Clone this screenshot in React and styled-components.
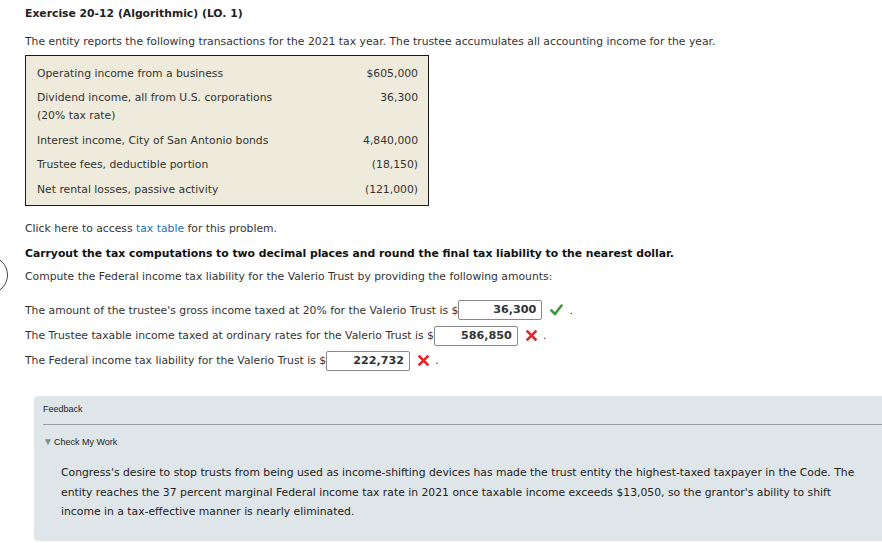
import React from 'react';
import styled, { createGlobalStyle } from 'styled-components';

const GlobalStyle = createGlobalStyle`
  html, body {
    margin: 0;
    padding: 0;
    background: #fff;
  }
  body {
    font-family: "DejaVu Sans", Verdana, sans-serif;
    font-size: 10.8px;
    color: #333;
    overflow: hidden;
  }
`;

const transactions = [
  { label: 'Operating income from a business', amount: '$605,000' },
  { label: 'Dividend income, all from U.S. corporations', note: '(20% tax rate)', amount: '36,300' },
  { label: 'Interest income, City of San Antonio bonds', amount: '4,840,000' },
  { label: 'Trustee fees, deductible portion', amount: '(18,150)' },
  { label: 'Net rental losses, passive activity', amount: '(121,000)' },
];

const answers = [
  { text: "The amount of the trustee's gross income taxed at 20% for the Valerio Trust is $", value: '36,300', ok: true },
  { text: 'The Trustee taxable income taxed at ordinary rates for the Valerio Trust is $', value: '586,850', ok: false },
  { text: 'The Federal income tax liability for the Valerio Trust is $', value: '222,732', ok: false },
];

function Check() {
  return (
    <svg width="13" height="12" viewBox="0 0 13 12">
      <path d="M1.5 6.5 L5 10 L11.5 1.5" fill="none" stroke="#3a9a3a" strokeWidth="2.6" strokeLinecap="round" strokeLinejoin="round" />
    </svg>
  );
}

function Cross() {
  return (
    <svg width="11" height="11" viewBox="0 0 11 11">
      <path d="M1.5 1.5 L9.5 9.5 M9.5 1.5 L1.5 9.5" fill="none" stroke="#e0262b" strokeWidth="2.6" strokeLinecap="square" />
    </svg>
  );
}

export default function App() {
  return (
    <Page>
      <GlobalStyle />
      <EdgeArc />
      <Title>Exercise 20-12 (Algorithmic) (LO. 1)</Title>
      <Intro>
        The entity reports the following transactions for the 2021 tax year. The trustee accumulates all accounting income for the year.
      </Intro>

      <Ledger>
        {transactions.map((t) => (
          <LedgerRow key={t.label}>
            <LedgerLabel>
              {t.label}
              {t.note && <Note>{t.note}</Note>}
            </LedgerLabel>
            <LedgerAmount>{t.amount}</LedgerAmount>
          </LedgerRow>
        ))}
      </Ledger>

      <Line $top={16}>
        Click here to access <Link>tax table</Link> for this problem.
      </Line>
      <Instruction>
        Carryout the tax computations to two decimal places and round the final tax liability to the nearest dollar.
      </Instruction>
      <Line $top={9}>Compute the Federal income tax liability for the Valerio Trust by providing the following amounts:</Line>

      <Answers>
        {answers.map((a) => (
          <AnswerRow key={a.text}>
            {a.text}
            <AnswerBox>{a.value}</AnswerBox>
            <Mark>{a.ok ? <Check /> : <Cross />}</Mark>
            <Dot>.</Dot>
          </AnswerRow>
        ))}
      </Answers>

      <Feedback>
        <FeedbackHead>Feedback</FeedbackHead>
        <Toggle>
          <Caret>▼</Caret>Check My Work
        </Toggle>
        <Explanation>
          Congress's desire to stop trusts from being used as income-shifting devices has made the trust entity the highest-taxed taxpayer in the Code. The
          entity reaches the 37 percent marginal Federal income tax rate in 2021 once taxable income exceeds $13,050, so the grantor's ability to shift
          income in a tax-effective manner is nearly eliminated.
        </Explanation>
      </Feedback>
    </Page>
  );
}

const Page = styled.div`
  position: relative;
  width: 882px;
  height: 543px;
  padding: 7px 0 0 25px;
  box-sizing: border-box;
  overflow: hidden;
`;

const EdgeArc = styled.div`
  position: absolute;
  left: -30px;
  top: 256px;
  width: 36px;
  height: 36px;
  border: 1.5px solid #444;
  border-radius: 50%;
`;

const Title = styled.h1`
  margin: 0;
  font-size: 10.8px;
  font-weight: bold;
  color: #222;
  line-height: 14px;
`;

const Intro = styled.p`
  margin: 14px 0 0;
  line-height: 14px;
`;

const Ledger = styled.div`
  margin-top: 6px;
  width: 404px;
  box-sizing: border-box;
  border: 1px solid #1a1a1a;
  background: #eeebdc;
  padding: 6px 10px 3px 11px;
  display: flex;
  flex-direction: column;
`;

const LedgerRow = styled.div`
  display: flex;
  justify-content: space-between;
  align-items: flex-start;
  padding: 2px 0 2.4px;
  line-height: 20px;
`;

const LedgerLabel = styled.div`
  display: flex;
  flex-direction: column;
  line-height: 20px;
`;

const Note = styled.span`
  margin-top: -2px;
`;

const LedgerAmount = styled.div`
  text-align: right;
`;

const Line = styled.div`
  margin-top: ${(p) => p.$top}px;
  line-height: 14px;
`;

const Link = styled.span`
  color: #1f6fb5;
`;

const Instruction = styled.div`
  margin-top: 11px;
  font-weight: bold;
  color: #111;
  line-height: 14px;
`;

const Answers = styled.div`
  margin-top: 16px;
  display: flex;
  flex-direction: column;
  gap: 4.2px;
`;

const AnswerRow = styled.div`
  display: flex;
  align-items: center;
  height: 21px;
`;

const AnswerBox = styled.div`
  width: 84px;
  height: 20px;
  box-sizing: border-box;
  border: 1px solid #8a8a8a;
  border-radius: 2px;
  background: #fff;
  padding: 0 5px;
  font-size: 11.2px;
  font-weight: bold;
  color: #333;
  text-align: right;
  line-height: 18px;
`;

const Mark = styled.span`
  display: inline-flex;
  margin-left: 8px;
`;

const Dot = styled.span`
  margin-left: 6px;
`;

const Feedback = styled.section`
  margin-top: 25px;
  margin-left: 9px;
  width: 860px;
  height: 145px;
  background: #dfe6e9;
  border-radius: 4px;
  padding: 8px 0 0 9px;
  box-sizing: border-box;
`;

const FeedbackHead = styled.div`
  font-family: "Liberation Sans", Arial, sans-serif;
  font-size: 9px;
  color: #222;
  padding-bottom: 9px;
  border-bottom: 1px solid #9a9d9f;
  line-height: 11px;
`;

const Toggle = styled.div`
  margin-top: 11px;
  font-family: "Liberation Sans", Arial, sans-serif;
  font-size: 9px;
  color: #222;
  line-height: 11px;
`;

const Caret = styled.span`
  color: #8a8a8a;
  font-size: 10px;
  margin-right: 1px;
`;

const Explanation = styled.p`
  margin: 15px 0 0 18px;
  width: 812px;
  line-height: 19.5px;
  color: #222;
`;
